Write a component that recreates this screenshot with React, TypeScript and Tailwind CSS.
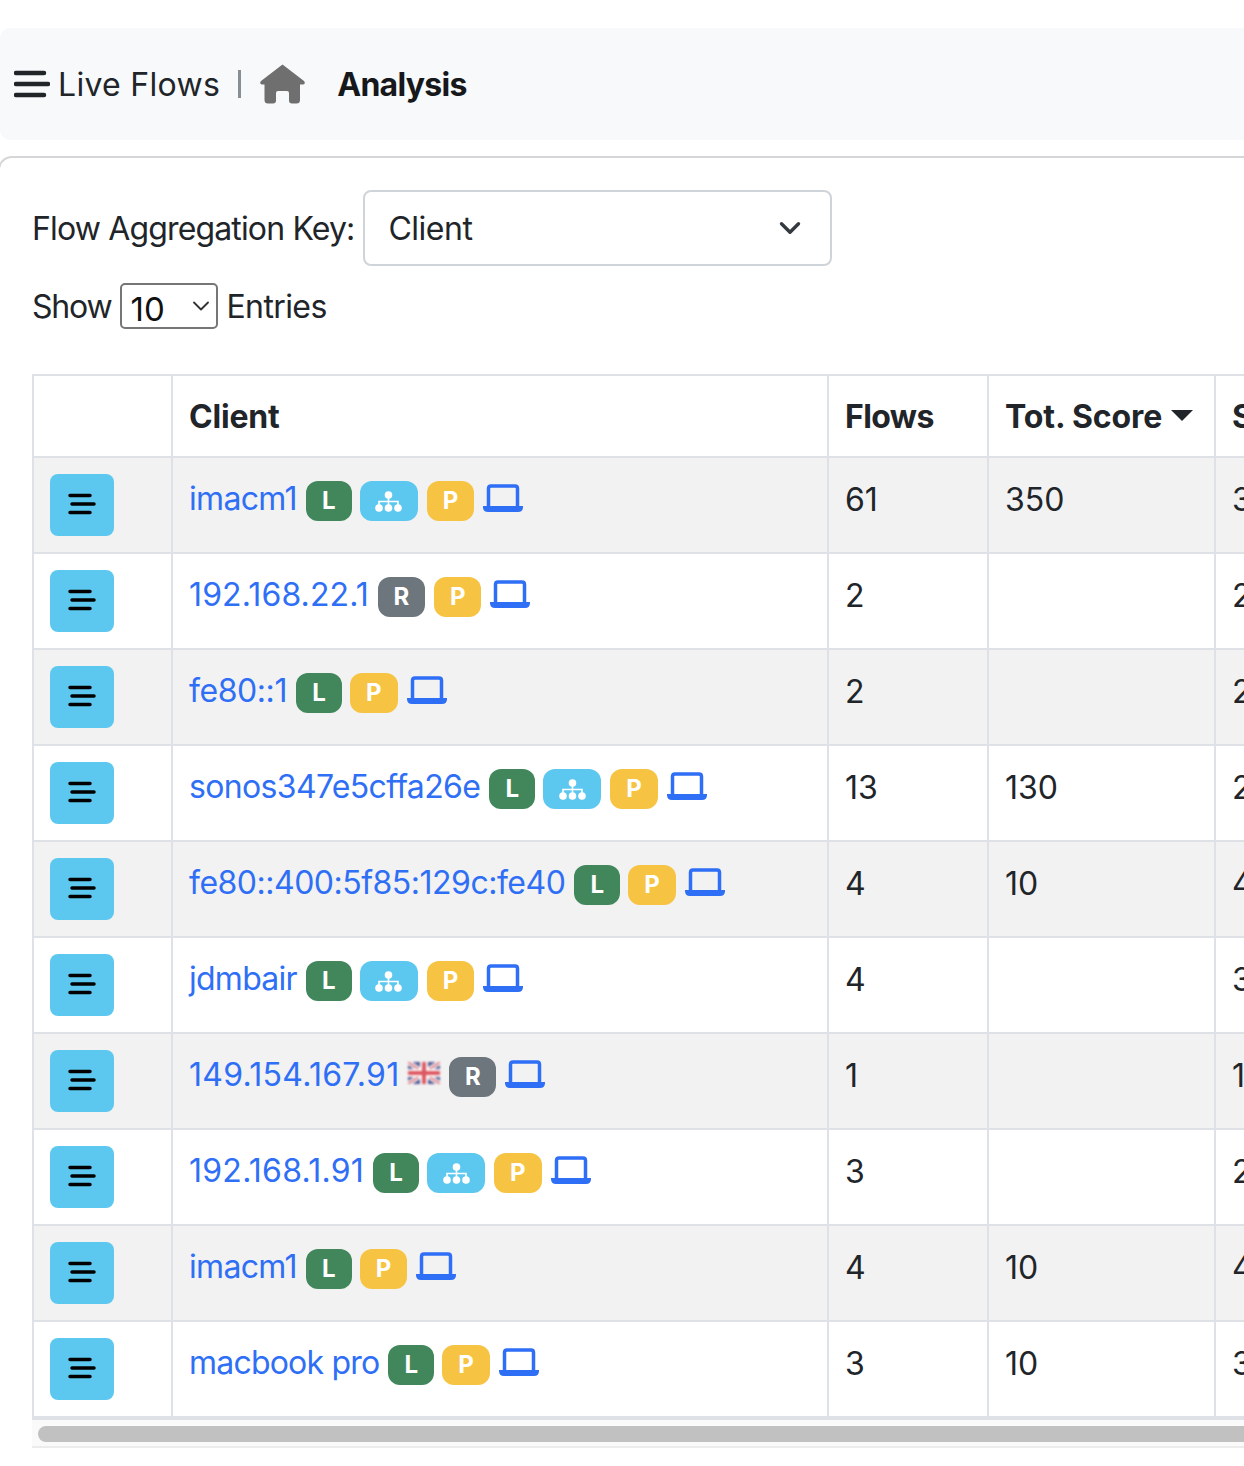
import { ChevronDown } from 'lucide-react';

type Row = {
  name: string;
  track: string;
  badges: string[];
  flows: string;
  score: string;
  last: string;
};

const rows: Row[] = [
  { name: 'imacm1', track: 'tracking-[-0.67px]', badges: ['L', 'S', 'P'], flows: '61', score: '350', last: '3' },
  { name: '192.168.22.1', track: 'tracking-[0.12px]', badges: ['R', 'P'], flows: '2', score: '', last: '2' },
  { name: 'fe80::1', track: 'tracking-[-0.43px]', badges: ['L', 'P'], flows: '2', score: '', last: '2' },
  { name: 'sonos347e5cffa26e', track: 'tracking-[-0.65px]', badges: ['L', 'S', 'P'], flows: '13', score: '130', last: '2' },
  { name: 'fe80::400:5f85:129c:fe40', track: 'tracking-[-0.5px]', badges: ['L', 'P'], flows: '4', score: '10', last: '4' },
  { name: 'jdmbair', track: 'tracking-[-0.75px]', badges: ['L', 'S', 'P'], flows: '4', score: '', last: '3' },
  { name: '149.154.167.91', track: 'tracking-[0.28px]', badges: ['F', 'R'], flows: '1', score: '', last: '1' },
  { name: '192.168.1.91', track: 'tracking-[0.25px]', badges: ['L', 'S', 'P'], flows: '3', score: '', last: '2' },
  { name: 'imacm1', track: 'tracking-[-0.67px]', badges: ['L', 'P'], flows: '4', score: '10', last: '4' },
  { name: 'macbook pro', track: 'tracking-[-0.8px]', badges: ['L', 'P'], flows: '3', score: '10', last: '3' },
];

const LinesIcon = () => (
  <svg width="28" height="22" viewBox="0 0 28 22" fill="none" stroke="#000" strokeWidth="3.500" strokeLinecap="round" className="mb-[2px]">
    <path d="M2 2.500H22M4 11H26M2 19.500H22" />
  </svg>
);

const LaptopIcon = () => (
  <svg width="40" height="28" viewBox="0 0 40 28" fill="none" className="shrink-0">
    <path d="M5.500 22V4.500Q5.500 2 8 2H32Q34.500 2 34.500 4.500V22" stroke="#2f6ff6" strokeWidth="3.500" />
    <path d="M0 22H40V23Q40 28 35 28H5Q0 28 0 23Z" fill="#2f6ff6" />
  </svg>
);

const SitemapIcon = () => (
  <svg width="27" height="21" viewBox="0 0 27 21" fill="none">
    <path d="M13.500 6V14M4 14V10.500H23V14" stroke="#fff" strokeWidth="1.600" />
    <circle cx="13.500" cy="4" r="3.800" fill="#fff" />
    <circle cx="4" cy="17" r="3.800" fill="#fff" />
    <circle cx="13.500" cy="17" r="3.800" fill="#fff" />
    <circle cx="23" cy="17" r="3.800" fill="#fff" />
  </svg>
);

const UkFlag = () => (
  <svg width="32" height="22" viewBox="0 0 32 22" className="mb-[8px] shrink-0 opacity-80 blur-[0.8px]">
    <rect width="32" height="22" fill="#28327a" />
    <path d="M0 0L32 22M32 0L0 22" stroke="#fff" strokeWidth="5" />
    <path d="M0 0L32 22M32 0L0 22" stroke="#d8404c" strokeWidth="1.500" />
    <path d="M16 0V22M0 11H32" stroke="#fff" strokeWidth="8" />
    <path d="M16 0V22M0 11H32" stroke="#d8303c" strokeWidth="4" />
  </svg>
);

const Badge = ({ kind }: { kind: string }) => {
  if (kind === 'F') return <UkFlag />;
  if (kind === 'S') {
    return (
      <span className="flex h-[40px] w-[58px] shrink-0 items-center justify-center rounded-[12px] bg-[#5dc8ef]">
        <SitemapIcon />
      </span>
    );
  }
  const style =
    kind === 'L'
      ? 'mr-[-1px] w-[46px] bg-[#41875b]'
      : kind === 'R'
        ? 'w-[47px] bg-[#6d757d]'
        : 'w-[47.5px] bg-[#f6c343]';
  return (
    <span className={`flex h-[40px] shrink-0 items-center justify-center rounded-[12px] text-[24px] font-bold text-white ${style}`}>
      {kind}
    </span>
  );
};

export default function App() {
  return (
    <div className="h-[1466px] w-[1244px] overflow-hidden bg-white pt-[28px] font-['Inter',sans-serif] text-[32px] leading-[48px] text-[#212529]">
      <nav className="flex h-[112px] items-center rounded-l-[10px] bg-[#f8f9fa] pl-[14px]">
        <svg width="36" height="28" viewBox="0 0 36 28" fill="none" stroke="#212529" strokeWidth="4.500" strokeLinecap="round" className="mb-[1px]">
          <path d="M2 3H30M2 14H34M2 25H30" />
        </svg>
        <span className="mt-[2px] ml-[8px] tracking-[0.3px]">Live Flows</span>
        <span className="ml-[18px] h-[28px] w-[3px] bg-[#868e96]" />
        <svg width="46" height="40" viewBox="0 0 46 40" fill="#6f6f6f" className="ml-[19px]">
          <path d="M22.500 0.500L44 17Q46 20 43 20.500H40V36Q40 39.500 36.500 39.500H32Q29 39.500 29 36.500V29Q29 27 27 27H18Q16 27 16 29V36.500Q16 39.500 13 39.500H8Q4.500 39.500 4.500 36V20.500H2Q-1 20 1 17Z" />
        </svg>
        <span className="mt-[2px] ml-[31px] font-bold tracking-[-0.7px] text-[#16181b]">Analysis</span>
      </nav>

      <div className="mt-[16px] ml-[-2px] h-[1400px] rounded-tl-[14px] border-t-2 border-l-2 border-[#d5d6d7] pt-[32px] pl-[32px]">
        <div className="flex h-[76px] items-center">
          <span className="mt-[2px] tracking-[-0.85px]">Flow Aggregation Key:</span>
          <div className="ml-[9px] flex h-[76px] w-[469px] items-center justify-between rounded-[8px] border-2 border-[#ced4da] pr-[23px] pl-[23px]">
            <span className="mt-[2px] tracking-[-0.5px]">Client</span>
            <ChevronDown size={34} strokeWidth={2.4} color="#343a40" />
          </div>
        </div>

        <div className="mt-[17px] flex h-[46px] items-center">
          <span className="mt-[2px] tracking-[-1.2px]">Show</span>
          <div className="relative mr-[8px] ml-[9px] h-[46px] w-[98px]">
            <select className="h-full w-full appearance-none rounded-[5px] border-2 border-[#767676] pb-[2px] pl-[8px] text-[33px] text-[#111]">
              <option>10</option>
            </select>
            <ChevronDown size={28} strokeWidth={1.6} color="#333" className="absolute top-[9px] right-[3px]" />
          </div>
          <span className="mt-[2px] tracking-[-0.6px]">Entries</span>
        </div>

        <div className="mt-[45px] w-[1212px] overflow-hidden">
          <table className="w-[1400px] table-fixed border-collapse">
            <colgroup>
              <col className="w-[139px]" />
              <col className="w-[656px]" />
              <col className="w-[160px]" />
              <col className="w-[227px]" />
              <col />
            </colgroup>
            <thead>
              <tr className="h-[82px] font-bold">
                <th className="border-2 border-[#dee2e6]" />
                <th className="border-2 border-[#dee2e6] px-[16px] pt-[2px] text-left tracking-[-0.2px]">Client</th>
                <th className="border-2 border-[#dee2e6] px-[16px] pt-[2px] text-left tracking-[-0.6px]">Flows</th>
                <th className="border-2 border-[#dee2e6] px-[16px] pt-[2px] text-left">
                  <span className="flex items-center gap-[9px] tracking-[-0.1px]">
                    Tot. Score
                    <span className="mt-[-4px] h-0 w-0 border-x-[11px] border-t-[11px] border-x-transparent border-t-[#212529]" />
                  </span>
                </th>
                <th className="border-2 border-[#dee2e6] px-[16px] pt-[2px] text-left">Score</th>
              </tr>
            </thead>
            <tbody>
              {rows.map((row, i) => (
                <tr key={i} className={`h-[96px] ${i % 2 === 0 ? 'bg-[#f2f2f2]' : 'bg-white'}`}>
                  <td className="border-2 border-[#dee2e6] pl-[16px] align-middle">
                    <button className="flex h-[62px] w-[64px] items-center justify-center rounded-[8px] bg-[#5dc8ef]">
                      <LinesIcon />
                    </button>
                  </td>
                  <td className="border-2 border-[#dee2e6] px-[16px] pb-[8px]">
                    <div className="flex items-center gap-[9px]">
                      <a className={`mb-[4px] whitespace-nowrap text-[#2f6ff6] ${row.track}`}>{row.name}</a>
                      {row.badges.map((b, j) => (
                        <Badge key={j} kind={b} />
                      ))}
                      <span className="mb-[6px] flex"><LaptopIcon /></span>
                    </div>
                  </td>
                  <td className="border-2 border-[#dee2e6] px-[16px] pb-[10px]">{row.flows}</td>
                  <td className="border-2 border-[#dee2e6] px-[16px] pb-[10px]">{row.score}</td>
                  <td className="border-2 border-[#dee2e6] px-[16px] pb-[10px]">{row.last}</td>
                </tr>
              ))}
            </tbody>
          </table>
          <div className="flex h-[30px] items-center border-t-2 border-b-2 border-t-[#dee2e6] border-b-[#ececec] bg-[#fafafa] pt-[2px] pl-[6px]">
            <div className="h-[16px] w-full rounded-l-[8px] bg-[#c1c1c1]" />
          </div>
        </div>
      </div>
    </div>
  );
}
